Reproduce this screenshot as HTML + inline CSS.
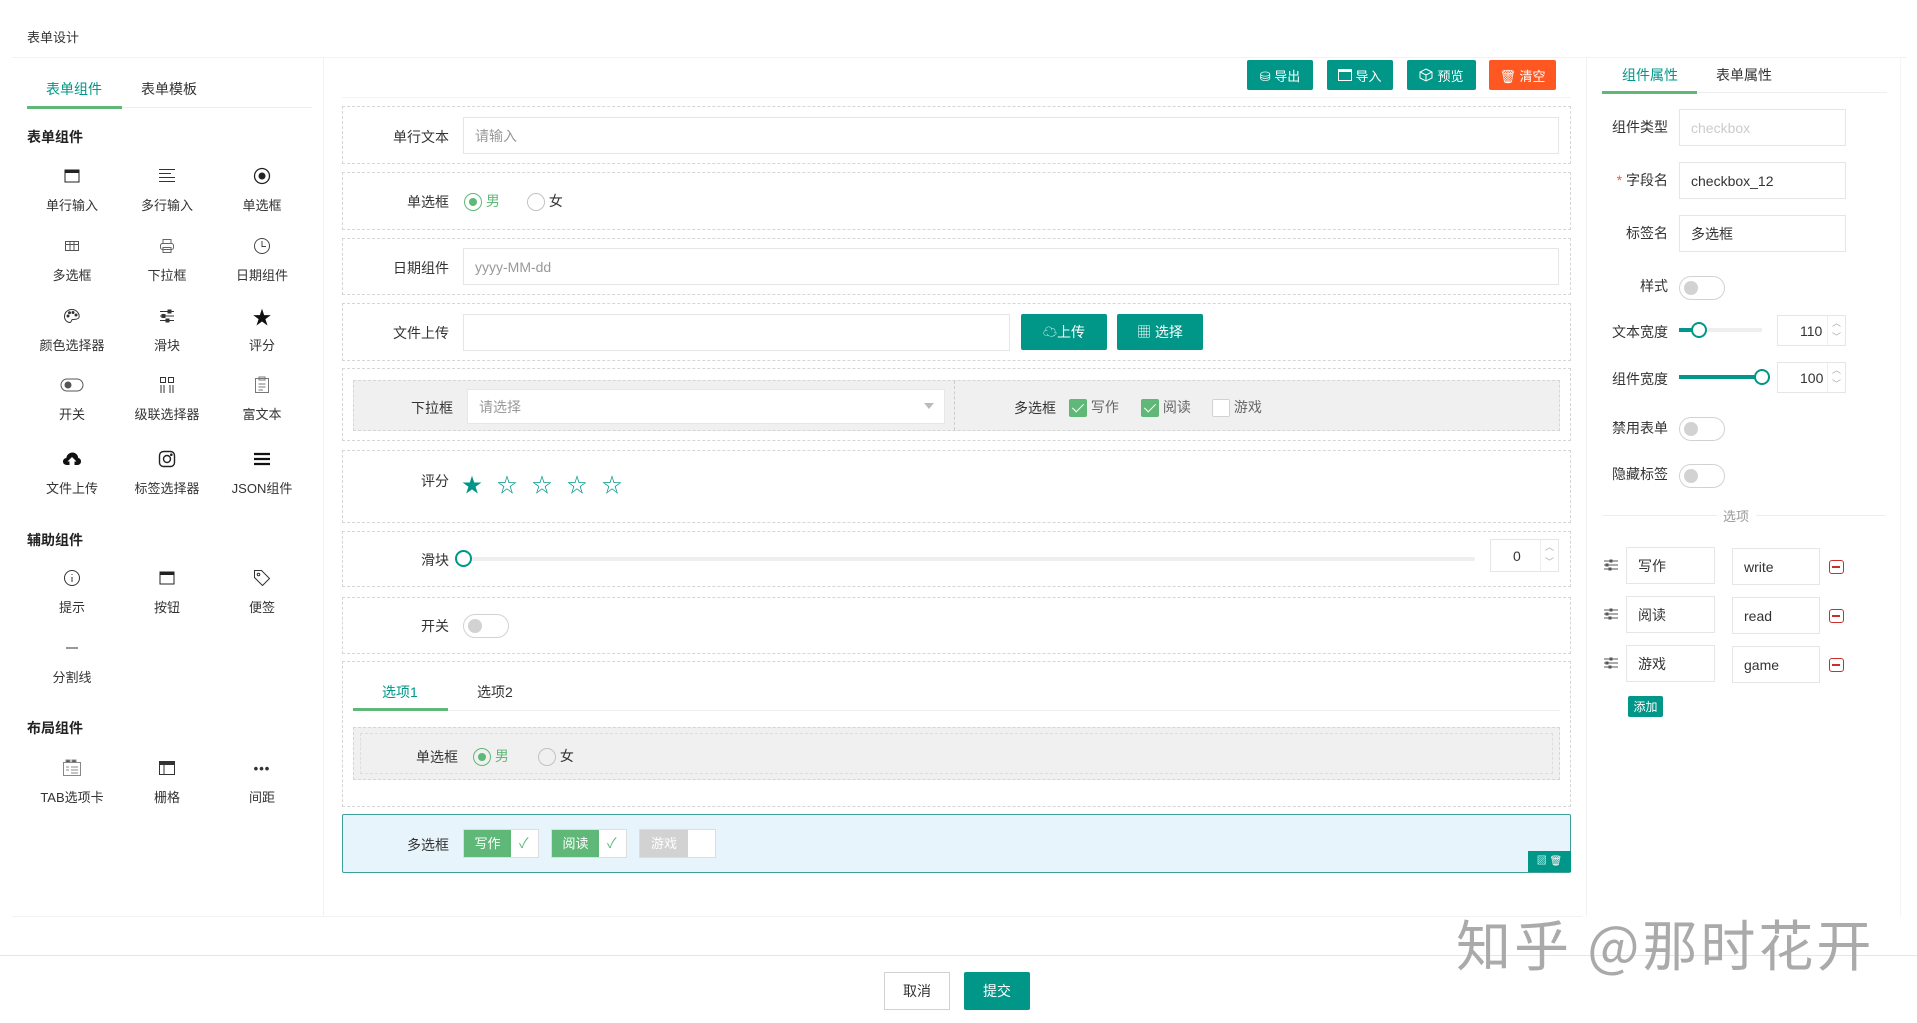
<!DOCTYPE html>
<html><head><meta charset="utf-8"><style>
*{box-sizing:border-box;margin:0;padding:0}
body{width:1917px;height:1023px;position:relative;background:#fff;font-family:"Liberation Sans","Noto Sans CJK SC",sans-serif;font-size:14px;color:#333;overflow:hidden}
.a{position:absolute}
.dash{position:absolute;border:1px dashed #d6d6d6}
.inp{position:absolute;border:1px solid #e6e6e6;background:#fff;color:#999;padding-left:11px;display:flex;align-items:center;font-size:14px}
.lbl{position:absolute;text-align:right;font-size:14px;color:#333}
.btn{position:absolute;background:#009688;color:#fff;border-radius:2px;display:flex;align-items:center;justify-content:center;font-size:13px}
.it{position:absolute;width:100px;text-align:center;font-size:13px;color:#333}
.it .ic{height:22px;display:flex;justify-content:center;align-items:center;margin-bottom:8px}
.sec{position:absolute;left:27px;font-weight:bold;font-size:14px;color:#222}
.tog{position:absolute;width:46px;height:24px;border:1px solid #d2d2d2;border-radius:12px;background:#fff}
.tog:after{content:"";position:absolute;left:4px;top:4px;width:14px;height:14px;border-radius:50%;background:#d2d2d2}
.radio{display:inline-block;width:18px;height:18px;border:1px solid #c2c2c2;border-radius:50%;vertical-align:middle;position:relative}
.radio.on{border-color:#5FB878}
.radio.on:after{content:"";position:absolute;left:4px;top:4px;width:8px;height:8px;border-radius:50%;background:#5FB878}
.cb{display:inline-block;width:18px;height:18px;border:1px solid #d2d2d2;border-radius:2px;vertical-align:middle;background:#fff;position:relative}
.cb.on{background:#5FB878;border-color:#5FB878}
.cb.on:after{content:"";position:absolute;left:5px;top:1px;width:5px;height:10px;border:solid #fff;border-width:0 1.5px 1.5px 0;transform:rotate(45deg)}
.star{color:#009688;font-size:20px}
</style></head><body>
<div class="a" style="left:27px;top:27px;font-size:13px;color:#333">表单设计</div>
<div class="a" style="left:12px;top:57px;width:1895px;height:1px;background:#f2f2f2"></div>

<div class="a" style="left:12px;top:57px;width:312px;height:860px;border-right:1px solid #f2f2f2"></div>
<div class="a" style="left:46px;top:79px;color:#009688;font-size:14px">表单组件</div>
<div class="a" style="left:141px;top:79px;font-size:14px">表单模板</div>
<div class="a" style="left:27px;top:107px;width:285px;height:1px;background:#eee"></div>
<div class="a" style="left:27px;top:106px;width:95px;height:3px;background:#5FB878"></div>

<div class="sec" style="top:127px">表单组件</div>
<div class="it" style="left:22px;top:165px"><div class="ic"><svg width="16" height="14"><rect x="1" y="1" width="14" height="12" fill="none" stroke="#222"/><rect x="1" y="1" width="14" height="3" fill="#222"/></svg></div>单行输入</div>
<div class="it" style="left:117px;top:165px"><div class="ic"><svg width="18" height="16" stroke="#333"><path d="M1 1.5H17M1 5.5H13M1 9.5H17M1 13.5H17"/></svg></div>多行输入</div>
<div class="it" style="left:212px;top:165px"><div class="ic"><svg width="18" height="18"><circle cx="9" cy="9" r="7.5" fill="none" stroke="#222" stroke-width="1.3"/><circle cx="9" cy="9" r="3.5" fill="#222"/></svg></div>单选框</div>

<div class="it" style="left:22px;top:235px"><div class="ic"><svg width="16" height="14" stroke="#555" fill="none"><rect x="1.5" y="2.5" width="13" height="9"/><path d="M1.5 5.5H14.5M6 2.5V11.5M10 2.5V11.5"/></svg></div>多选框</div>
<div class="it" style="left:117px;top:235px"><div class="ic"><svg width="16" height="16" stroke="#666" fill="none"><rect x="4" y="1.5" width="8" height="4"/><rect x="1.5" y="5.5" width="13" height="6" rx="2"/><rect x="4" y="9.5" width="8" height="5"/></svg></div>下拉框</div>
<div class="it" style="left:212px;top:235px"><div class="ic"><svg width="18" height="18" stroke="#444" fill="none"><circle cx="9" cy="9" r="7.5"/><path d="M9 4V9.5H13"/></svg></div>日期组件</div>

<div class="it" style="left:22px;top:305px"><div class="ic"><svg width="18" height="16" stroke="#333" fill="none"><path d="M9 1.5C4.5 1.5 1.5 4.5 1.5 8.5 1.5 12 4 14.5 7 14.5 8.5 14.5 8 12 9.5 11.5 11 11 15 12 16 9.5 17 6 13.5 1.5 9 1.5Z"/><circle cx="5" cy="8" r="1" fill="#333"/><circle cx="6.5" cy="4.8" r="1" fill="#333"/><circle cx="10" cy="4.5" r="1" fill="#333"/><circle cx="13" cy="7" r="1" fill="#333"/></svg></div>颜色选择器</div>
<div class="it" style="left:117px;top:305px"><div class="ic"><svg width="16" height="14" stroke="#333"><path d="M1 2.5H15M1 7H15M1 11.5H15"/><rect x="9" y="1" width="3" height="3" fill="#333"/><rect x="3" y="5.5" width="3" height="3" fill="#333"/><rect x="7" y="10" width="3" height="3" fill="#333"/></svg></div>滑块</div>
<div class="it" style="left:212px;top:305px"><div class="ic" style="font-size:19px;color:#111">★</div>评分</div>

<div class="it" style="left:22px;top:374px"><div class="ic"><svg width="24" height="14"><rect x="1" y="1" width="22" height="12" rx="6" fill="none" stroke="#555"/><circle cx="8" cy="7" r="3.5" fill="#555"/></svg></div>开关</div>
<div class="it" style="left:117px;top:374px"><div class="ic"><svg width="16" height="18" stroke="#333" fill="none"><rect x="1.5" y="1.5" width="5" height="5"/><rect x="9.5" y="1.5" width="5" height="5"/><path d="M2 9V17M5 9V17M11 9V17M14 9V17"/></svg></div>级联选择器</div>
<div class="it" style="left:212px;top:374px"><div class="ic"><svg width="16" height="18" stroke="#777" fill="none"><rect x="1.5" y="2.5" width="13" height="14"/><rect x="5" y="1" width="6" height="3"/><path d="M4.5 8H11.5M4.5 11H11.5M4.5 14H9"/></svg></div>富文本</div>

<div class="it" style="left:22px;top:448px"><div class="ic"><svg width="20" height="16"><path d="M5 14C2 14 1 12 1 10.5 1 8.5 2.5 7.2 4.3 7 4.8 3.5 7.5 1.5 10.5 1.5 13.8 1.5 16 4 16.2 7 18 7.3 19 8.7 19 10.5 19 12.5 17.5 14 15.5 14H12.5V10.5H14.5L10 6 5.5 10.5H7.5V14Z" fill="#111"/></svg></div>文件上传</div>
<div class="it" style="left:117px;top:448px"><div class="ic"><svg width="18" height="18" stroke="#222" fill="none" stroke-width="1.4"><rect x="1.5" y="1.5" width="15" height="15" rx="4"/><circle cx="9" cy="9" r="3.5"/><circle cx="13.3" cy="4.7" r=".6" fill="#222"/></svg></div>标签选择器</div>
<div class="it" style="left:212px;top:448px"><div class="ic"><svg width="16" height="14" stroke="#111" stroke-width="2.2"><path d="M0 2H16M0 7H16M0 12H16"/></svg></div>JSON组件</div>

<div class="sec" style="top:530px">辅助组件</div>
<div class="it" style="left:22px;top:567px"><div class="ic"><svg width="18" height="18" stroke="#333" fill="none"><circle cx="9" cy="9" r="7.5"/><path d="M9 8V13M9 5V6"/></svg></div>提示</div>
<div class="it" style="left:117px;top:567px"><div class="ic"><svg width="16" height="14"><rect x="1" y="1" width="14" height="12" fill="none" stroke="#222"/><rect x="1" y="1" width="14" height="3" fill="#222"/></svg></div>按钮</div>
<div class="it" style="left:212px;top:567px"><div class="ic"><svg width="18" height="18" stroke="#333" fill="none"><path d="M1.5 1.5H8.5L16.5 9.5 9.5 16.5 1.5 8.5Z"/><circle cx="5.5" cy="5.5" r="1.3"/></svg></div>便签</div>
<div class="it" style="left:22px;top:637px"><div class="ic"><svg width="12" height="4"><path d="M0 2H12" stroke="#333"/></svg></div>分割线</div>

<div class="sec" style="top:718px">布局组件</div>
<div class="it" style="left:22px;top:757px"><div class="ic"><svg width="20" height="18" stroke="#888" fill="none"><rect x="1.5" y="3.5" width="17" height="13"/><rect x="4" y="1" width="4" height="2.5" fill="#555"/><rect x="10" y="1" width="4" height="2.5" fill="#555"/><path d="M4 8H7M9 8H16M4 11H7M9 11H16M9 14H16"/></svg></div>TAB选项卡</div>
<div class="it" style="left:117px;top:757px"><div class="ic"><svg width="18" height="16" stroke="#333" fill="none"><rect x="1.5" y="1.5" width="15" height="13"/><rect x="1.5" y="1.5" width="15" height="3" fill="#333"/><path d="M6 4.5V14.5"/></svg></div>栅格</div>
<div class="it" style="left:212px;top:757px"><div class="ic" style="font-weight:bold;letter-spacing:1px">•••</div>间距</div>

<div class="a" style="left:12px;top:916px;width:1570px;height:1px;background:#f2f2f2"></div>

<div class="btn" style="left:1247px;top:60px;width:66px;height:30px">⛁ 导出</div>
<div class="btn" style="left:1327px;top:60px;width:66px;height:30px"><svg width="14" height="12" style="margin-right:3px"><rect x=".5" y=".5" width="13" height="11" fill="none" stroke="#fff"/><rect x="0" y="0" width="14" height="3" fill="#fff"/></svg>导入</div>
<div class="btn" style="left:1407px;top:60px;width:69px;height:30px"><svg width="14" height="14" stroke="#fff" fill="none" style="margin-right:4px"><path d="M7 1L13 4V10L7 13 1 10V4ZM1 4L7 7 13 4M7 7V13"/></svg>预览</div>
<div class="btn" style="left:1489px;top:60px;width:67px;height:30px;background:#FF5722">🗑 清空</div>
<div class="a" style="left:342px;top:97px;width:1229px;height:1px;background:#f2f2f2"></div>

<div class="dash" style="left:342px;top:106px;width:1229px;height:58px"></div>
<div class="lbl" style="left:342px;top:127px;width:107px">单行文本</div>
<div class="inp" style="left:463px;top:117px;width:1096px;height:37px">请输入</div>
<div class="dash" style="left:342px;top:172px;width:1229px;height:58px"></div>
<div class="lbl" style="left:342px;top:192px;width:107px">单选框</div>
<div class="a" style="left:464px;top:191px;color:#5FB878"><span class="radio on"></span> 男</div>
<div class="a" style="left:527px;top:191px"><span class="radio"></span> 女</div>
<div class="dash" style="left:342px;top:238px;width:1229px;height:57px"></div>
<div class="lbl" style="left:342px;top:258px;width:107px">日期组件</div>
<div class="inp" style="left:463px;top:248px;width:1096px;height:37px">yyyy-MM-dd</div>
<div class="dash" style="left:342px;top:303px;width:1229px;height:58px"></div>
<div class="lbl" style="left:342px;top:323px;width:107px">文件上传</div>
<div class="inp" style="left:463px;top:314px;width:547px;height:37px"></div>
<div class="btn" style="left:1021px;top:314px;width:86px;height:36px;font-size:14px">☁上传</div>
<div class="btn" style="left:1117px;top:314px;width:86px;height:36px;font-size:14px">▦ 选择</div>
<div class="dash" style="left:342px;top:368px;width:1229px;height:73px"></div>
<div class="dash" style="left:353px;top:380px;width:1207px;height:51px;background:#f0f0f0"></div>
<div class="a" style="left:954px;top:381px;width:1px;height:49px;border-left:1px dashed #ccc"></div>
<div class="lbl" style="left:353px;top:398px;width:100px">下拉框</div>
<div class="inp" style="left:467px;top:389px;width:478px;height:35px">请选择<span style="position:absolute;right:10px;top:13px;border:5px solid transparent;border-top:6px solid #bbb"></span></div>
<div class="lbl" style="left:960px;top:398px;width:96px">多选框</div>
<div class="a" style="left:1069px;top:397px;color:#666"><span class="cb on"></span> 写作</div>
<div class="a" style="left:1141px;top:397px;color:#666"><span class="cb on"></span> 阅读</div>
<div class="a" style="left:1212px;top:397px;color:#666"><span class="cb"></span> 游戏</div>
<div class="dash" style="left:342px;top:450px;width:1229px;height:73px"></div>
<div class="lbl" style="left:342px;top:471px;width:107px">评分</div>
<div class="a star" style="left:462px;top:469px;letter-spacing:15px">★☆☆☆☆</div>
<div class="dash" style="left:342px;top:531px;width:1229px;height:56px"></div>
<div class="lbl" style="left:342px;top:550px;width:107px">滑块</div>
<div class="a" style="left:463px;top:557px;width:1012px;height:4px;background:#eee;border-radius:2px"></div>
<div class="a" style="left:455px;top:550px;width:17px;height:17px;border:2px solid #009688;border-radius:50%;background:#fff"></div>
<div class="inp" style="left:1490px;top:539px;width:69px;height:33px;color:#333;padding-left:22px">0<span style="position:absolute;right:0;top:0;width:18px;height:31px;border-left:1px solid #eee;font-size:9px;color:#aaa;text-align:center;line-height:15px">︿<br>﹀</span></div>
<div class="dash" style="left:342px;top:597px;width:1229px;height:57px"></div>
<div class="lbl" style="left:342px;top:616px;width:107px">开关</div>
<div class="tog" style="left:463px;top:614px"></div>
<div class="dash" style="left:342px;top:661px;width:1229px;height:146px"></div>
<div class="a" style="left:382px;top:682px;color:#009688">选项1</div>
<div class="a" style="left:477px;top:682px">选项2</div>
<div class="a" style="left:353px;top:710px;width:1207px;height:1px;background:#eee"></div>
<div class="a" style="left:353px;top:708px;width:95px;height:3px;background:#5FB878"></div>
<div class="dash" style="left:353px;top:727px;width:1207px;height:53px;background:#f0f0f0"></div>
<div class="a" style="left:360px;top:733px;width:1193px;height:41px;border:1px dashed #ddd"></div>
<div class="lbl" style="left:353px;top:747px;width:105px">单选框</div>
<div class="a" style="left:473px;top:746px;color:#5FB878"><span class="radio on"></span> 男</div>
<div class="a" style="left:538px;top:746px"><span class="radio"></span> 女</div>
<div class="a" style="left:342px;top:814px;width:1229px;height:59px;background:#e8f4fb;border:1px solid #3e9f9a;border-radius:2px"></div>
<div class="lbl" style="left:342px;top:835px;width:107px">多选框</div>
<div class="a" style="left:463px;top:829px;width:76px;height:29px;border:1px solid #ddd;background:#fff"><div style="width:47px;height:27px;background:#5FB878;color:#fff;text-align:center;line-height:27px;font-size:13px">写作</div><span style="position:absolute;left:55px;top:3px;color:#5FB878">✓</span></div>
<div class="a" style="left:551px;top:829px;width:76px;height:29px;border:1px solid #ddd;background:#fff"><div style="width:47px;height:27px;background:#5FB878;color:#fff;text-align:center;line-height:27px;font-size:13px">阅读</div><span style="position:absolute;left:55px;top:3px;color:#5FB878">✓</span></div>
<div class="a" style="left:639px;top:829px;width:77px;height:29px;border:1px solid #ddd;background:#fff"><div style="width:48px;height:27px;background:#d2d2d2;color:#fff;text-align:center;line-height:27px;font-size:13px">游戏</div></div>
<div class="a" style="left:1528px;top:851px;width:43px;height:21px;background:#009688;color:#fff;font-size:10px;text-align:center;line-height:21px">▨ 🗑</div>

<div class="a" style="left:1586px;top:57px;width:1px;height:860px;background:#f2f2f2"></div>
<div class="a" style="left:1622px;top:65px;color:#009688">组件属性</div>
<div class="a" style="left:1716px;top:65px">表单属性</div>
<div class="a" style="left:1602px;top:92px;width:285px;height:1px;background:#eee"></div>
<div class="a" style="left:1602px;top:91px;width:95px;height:3px;background:#5FB878"></div>

<div class="lbl" style="left:1590px;top:117px;width:78px">组件类型</div>
<div class="inp" style="left:1679px;top:109px;width:167px;height:37px;color:#ccc">checkbox</div>
<div class="lbl" style="left:1590px;top:170px;width:78px"><span style="color:#FF5722">*</span> 字段名</div>
<div class="inp" style="left:1679px;top:162px;width:167px;height:37px;color:#333">checkbox_12</div>
<div class="lbl" style="left:1590px;top:223px;width:78px">标签名</div>
<div class="inp" style="left:1679px;top:215px;width:167px;height:37px;color:#333">多选框</div>
<div class="lbl" style="left:1590px;top:276px;width:78px">样式</div>
<div class="tog" style="left:1679px;top:276px"></div>
<div class="lbl" style="left:1590px;top:322px;width:78px">文本宽度</div>
<div class="a" style="left:1679px;top:328px;width:83px;height:4px;background:#eee"></div>
<div class="a" style="left:1679px;top:328px;width:20px;height:4px;background:#009688"></div>
<div class="a" style="left:1691px;top:322px;width:16px;height:16px;border:2px solid #009688;border-radius:50%;background:#fff"></div>
<div class="inp" style="left:1777px;top:315px;width:69px;height:31px;color:#333;padding-left:22px">110<span style="position:absolute;right:0;top:0;width:18px;height:29px;border-left:1px solid #eee;font-size:9px;color:#aaa;text-align:center;line-height:14px">︿<br>﹀</span></div>
<div class="lbl" style="left:1590px;top:369px;width:78px">组件宽度</div>
<div class="a" style="left:1679px;top:375px;width:83px;height:4px;background:#009688"></div>
<div class="a" style="left:1754px;top:369px;width:16px;height:16px;border:2px solid #009688;border-radius:50%;background:#fff"></div>
<div class="inp" style="left:1777px;top:362px;width:69px;height:31px;color:#333;padding-left:22px">100<span style="position:absolute;right:0;top:0;width:18px;height:29px;border-left:1px solid #eee;font-size:9px;color:#aaa;text-align:center;line-height:14px">︿<br>﹀</span></div>
<div class="lbl" style="left:1590px;top:418px;width:78px">禁用表单</div>
<div class="tog" style="left:1679px;top:417px"></div>
<div class="lbl" style="left:1590px;top:464px;width:78px">隐藏标签</div>
<div class="tog" style="left:1679px;top:464px"></div>
<div class="a" style="left:1602px;top:515px;width:115px;height:1px;background:#eee"></div>
<div class="a" style="left:1756px;top:515px;width:130px;height:1px;background:#eee"></div>
<div class="a" style="left:1723px;top:506px;color:#999;font-size:13px">选项</div>

<div class="a" style="left:1604px;top:558px"><svg width="14" height="12" stroke="#555"><path d="M0 2H14M0 6H14M0 10H14"/><rect x="6" y="1" width="2" height="2" fill="#555"/><rect x="2" y="5" width="2" height="2" fill="#555"/><rect x="5" y="9" width="2" height="2" fill="#555"/></svg></div>
<div class="inp" style="left:1626px;top:547px;width:89px;height:37px;color:#333">写作</div>
<div class="inp" style="left:1732px;top:548px;width:88px;height:37px;color:#333">write</div>
<div class="a" style="left:1829px;top:560px;width:15px;height:14px;border:1.5px solid #c9302c;border-radius:3px"><div style="position:absolute;left:2px;top:5px;width:8px;height:1.5px;background:#c9302c"></div></div>

<div class="a" style="left:1604px;top:607px"><svg width="14" height="12" stroke="#555"><path d="M0 2H14M0 6H14M0 10H14"/><rect x="6" y="1" width="2" height="2" fill="#555"/><rect x="2" y="5" width="2" height="2" fill="#555"/><rect x="5" y="9" width="2" height="2" fill="#555"/></svg></div>
<div class="inp" style="left:1626px;top:596px;width:89px;height:37px;color:#333">阅读</div>
<div class="inp" style="left:1732px;top:597px;width:88px;height:37px;color:#333">read</div>
<div class="a" style="left:1829px;top:609px;width:15px;height:14px;border:1.5px solid #c9302c;border-radius:3px"><div style="position:absolute;left:2px;top:5px;width:8px;height:1.5px;background:#c9302c"></div></div>

<div class="a" style="left:1604px;top:656px"><svg width="14" height="12" stroke="#555"><path d="M0 2H14M0 6H14M0 10H14"/><rect x="6" y="1" width="2" height="2" fill="#555"/><rect x="2" y="5" width="2" height="2" fill="#555"/><rect x="5" y="9" width="2" height="2" fill="#555"/></svg></div>
<div class="inp" style="left:1626px;top:645px;width:89px;height:37px;color:#333">游戏</div>
<div class="inp" style="left:1732px;top:646px;width:88px;height:37px;color:#333">game</div>
<div class="a" style="left:1829px;top:658px;width:15px;height:14px;border:1.5px solid #c9302c;border-radius:3px"><div style="position:absolute;left:2px;top:5px;width:8px;height:1.5px;background:#c9302c"></div></div>
<div class="btn" style="left:1628px;top:696px;width:35px;height:21px;font-size:12px">添加</div>
<div class="a" style="left:1900px;top:57px;width:1px;height:860px;background:#f5f5f5"></div>

<div class="a" style="left:0;top:955px;width:1917px;height:1px;background:#e6e6e6"></div>
<div class="a" style="left:884px;top:972px;width:66px;height:38px;border:1px solid #d2d2d2;background:#fff;text-align:center;line-height:36px;font-size:14px">取消</div>
<div class="btn" style="left:964px;top:972px;width:66px;height:38px;font-size:14px">提交</div>

<div class="a" style="left:1456px;top:902px;font-size:55px;color:#aaa;white-space:nowrap;letter-spacing:3px;font-family:'Noto Sans CJK SC',sans-serif">知乎 @那时花开</div>
</body></html>
